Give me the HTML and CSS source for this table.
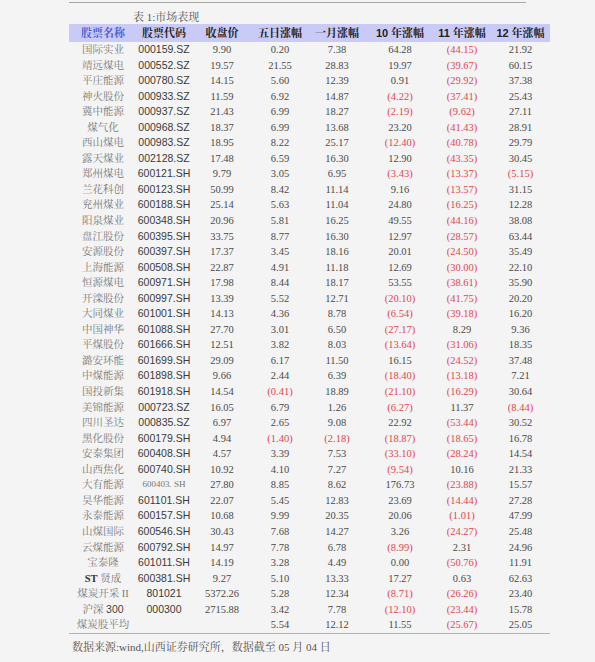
FILE: index.html
```html
<!DOCTYPE html>
<html lang="zh">
<head>
<meta charset="utf-8">
<link rel="stylesheet" href="styles.css">
</head>
<body>
<div class="page">
  <div class="toprule"></div>
  <div class="caption">表 1:市场表现</div>
  <table class="market">
    <colgroup>
      <col class="c1"><col class="c2"><col class="c3"><col class="c4"><col class="c5"><col class="c6"><col class="c7"><col class="c8">
    </colgroup>
    <thead>
      <tr>
        <th class="h-name">股票名称</th>
        <th>股票代码</th>
        <th>收盘价</th>
        <th>五日涨幅</th>
        <th>一月涨幅</th>
        <th><span class="hn">10</span> 年涨幅</th>
        <th><span class="hn">11</span> 年涨幅</th>
        <th><span class="hn">12</span> 年涨幅</th>
      </tr>
    </thead>
    <tbody>
      <tr><td class="name">国际实业</td><td class="code">000159.SZ</td><td>9.90</td><td>0.20</td><td>7.38</td><td>64.28</td><td class="neg">(44.15)</td><td>21.92</td></tr>
      <tr><td class="name">靖远煤电</td><td class="code">000552.SZ</td><td>19.57</td><td>21.55</td><td>28.83</td><td>19.97</td><td class="neg">(39.67)</td><td>60.15</td></tr>
      <tr><td class="name">平庄能源</td><td class="code">000780.SZ</td><td>14.15</td><td>5.60</td><td>12.39</td><td>0.91</td><td class="neg">(29.92)</td><td>37.38</td></tr>
      <tr><td class="name">神火股份</td><td class="code">000933.SZ</td><td>11.59</td><td>6.92</td><td>14.87</td><td class="neg">(4.22)</td><td class="neg">(37.41)</td><td>25.43</td></tr>
      <tr><td class="name">冀中能源</td><td class="code">000937.SZ</td><td>21.43</td><td>6.99</td><td>18.27</td><td class="neg">(2.19)</td><td class="neg">(9.62)</td><td>27.11</td></tr>
      <tr><td class="name">煤气化</td><td class="code">000968.SZ</td><td>18.37</td><td>6.99</td><td>13.68</td><td>23.20</td><td class="neg">(41.43)</td><td>28.91</td></tr>
      <tr><td class="name">西山煤电</td><td class="code">000983.SZ</td><td>18.95</td><td>8.22</td><td>25.17</td><td class="neg">(12.40)</td><td class="neg">(40.78)</td><td>29.79</td></tr>
      <tr><td class="name">露天煤业</td><td class="code">002128.SZ</td><td>17.48</td><td>6.59</td><td>16.30</td><td>12.90</td><td class="neg">(43.35)</td><td>30.45</td></tr>
      <tr><td class="name">郑州煤电</td><td class="code">600121.SH</td><td>9.79</td><td>3.05</td><td>6.95</td><td class="neg">(3.43)</td><td class="neg">(13.37)</td><td class="neg">(5.15)</td></tr>
      <tr><td class="name">兰花科创</td><td class="code">600123.SH</td><td>50.99</td><td>8.42</td><td>11.14</td><td>9.16</td><td class="neg">(13.57)</td><td>31.15</td></tr>
      <tr><td class="name">兖州煤业</td><td class="code">600188.SH</td><td>25.14</td><td>5.63</td><td>11.04</td><td>24.80</td><td class="neg">(16.25)</td><td>12.28</td></tr>
      <tr><td class="name">阳泉煤业</td><td class="code">600348.SH</td><td>20.96</td><td>5.81</td><td>16.25</td><td>49.55</td><td class="neg">(44.16)</td><td>38.08</td></tr>
      <tr><td class="name">盘江股份</td><td class="code">600395.SH</td><td>33.75</td><td>8.77</td><td>16.30</td><td>12.97</td><td class="neg">(28.57)</td><td>63.44</td></tr>
      <tr><td class="name">安源股份</td><td class="code">600397.SH</td><td>17.37</td><td>3.45</td><td>18.16</td><td>20.01</td><td class="neg">(24.50)</td><td>35.49</td></tr>
      <tr><td class="name">上海能源</td><td class="code">600508.SH</td><td>22.87</td><td>4.91</td><td>11.18</td><td>12.69</td><td class="neg">(30.00)</td><td>22.10</td></tr>
      <tr><td class="name">恒源煤电</td><td class="code">600971.SH</td><td>17.98</td><td>8.44</td><td>18.17</td><td>53.55</td><td class="neg">(38.61)</td><td>35.90</td></tr>
      <tr><td class="name">开滦股份</td><td class="code">600997.SH</td><td>13.39</td><td>5.52</td><td>12.71</td><td class="neg">(20.10)</td><td class="neg">(41.75)</td><td>20.20</td></tr>
      <tr><td class="name">大同煤业</td><td class="code">601001.SH</td><td>14.13</td><td>4.36</td><td>8.78</td><td class="neg">(6.54)</td><td class="neg">(39.18)</td><td>16.20</td></tr>
      <tr><td class="name">中国神华</td><td class="code">601088.SH</td><td>27.70</td><td>3.01</td><td>6.50</td><td class="neg">(27.17)</td><td>8.29</td><td>9.36</td></tr>
      <tr><td class="name">平煤股份</td><td class="code">601666.SH</td><td>12.51</td><td>3.82</td><td>8.03</td><td class="neg">(13.64)</td><td class="neg">(31.06)</td><td>18.35</td></tr>
      <tr><td class="name">潞安环能</td><td class="code">601699.SH</td><td>29.09</td><td>6.17</td><td>11.50</td><td>16.15</td><td class="neg">(24.52)</td><td>37.48</td></tr>
      <tr><td class="name">中煤能源</td><td class="code">601898.SH</td><td>9.66</td><td>2.44</td><td>6.39</td><td class="neg">(18.40)</td><td class="neg">(13.18)</td><td>7.21</td></tr>
      <tr><td class="name">国投新集</td><td class="code">601918.SH</td><td>14.54</td><td class="neg">(0.41)</td><td>18.89</td><td class="neg">(21.10)</td><td class="neg">(16.29)</td><td>30.64</td></tr>
      <tr><td class="name">美锦能源</td><td class="code">000723.SZ</td><td>16.05</td><td>6.79</td><td>1.26</td><td class="neg">(6.27)</td><td>11.37</td><td class="neg">(8.44)</td></tr>
      <tr><td class="name">四川圣达</td><td class="code">000835.SZ</td><td>6.97</td><td>2.65</td><td>9.08</td><td>22.92</td><td class="neg">(53.44)</td><td>30.52</td></tr>
      <tr><td class="name">黑化股份</td><td class="code">600179.SH</td><td>4.94</td><td class="neg">(1.40)</td><td class="neg">(2.18)</td><td class="neg">(18.87)</td><td class="neg">(18.65)</td><td>16.78</td></tr>
      <tr><td class="name">安泰集团</td><td class="code">600408.SH</td><td>4.57</td><td>3.39</td><td>7.53</td><td class="neg">(33.10)</td><td class="neg">(28.24)</td><td>14.54</td></tr>
      <tr><td class="name">山西焦化</td><td class="code">600740.SH</td><td>10.92</td><td>4.10</td><td>7.27</td><td class="neg">(9.54)</td><td>10.16</td><td>21.33</td></tr>
      <tr><td class="name">大有能源</td><td class="code-alt">600403. SH</td><td>27.80</td><td>8.85</td><td>8.62</td><td>176.73</td><td class="neg">(23.88)</td><td>15.57</td></tr>
      <tr><td class="name">昊华能源</td><td class="code">601101.SH</td><td>22.07</td><td>5.45</td><td>12.83</td><td>23.69</td><td class="neg">(14.44)</td><td>27.28</td></tr>
      <tr><td class="name">永泰能源</td><td class="code">600157.SH</td><td>10.68</td><td>9.99</td><td>20.35</td><td>20.06</td><td class="neg">(1.01)</td><td>47.99</td></tr>
      <tr><td class="name">山煤国际</td><td class="code">600546.SH</td><td>30.43</td><td>7.68</td><td>14.27</td><td>3.26</td><td class="neg">(24.27)</td><td>25.48</td></tr>
      <tr><td class="name">云煤能源</td><td class="code">600792.SH</td><td>14.97</td><td>7.78</td><td>6.78</td><td class="neg">(8.99)</td><td>2.31</td><td>24.96</td></tr>
      <tr><td class="name">宝泰隆</td><td class="code">601011.SH</td><td>14.19</td><td>3.28</td><td>4.49</td><td>0.00</td><td class="neg">(50.76)</td><td>11.91</td></tr>
      <tr><td class="name"><span class="st">ST</span> 贤成</td><td class="code">600381.SH</td><td>9.27</td><td>5.10</td><td>13.33</td><td>17.27</td><td>0.63</td><td>62.63</td></tr>
      <tr><td class="name">煤炭开采 II</td><td class="code">801021</td><td>5372.26</td><td>5.28</td><td>12.34</td><td class="neg">(8.71)</td><td class="neg">(26.26)</td><td>23.40</td></tr>
      <tr><td class="name">沪深 <span class="idx">300</span></td><td class="code">000300</td><td>2715.88</td><td>3.42</td><td>7.78</td><td class="neg">(12.10)</td><td class="neg">(23.44)</td><td>15.78</td></tr>
      <tr class="last"><td class="name">煤炭股平均</td><td class="code"></td><td></td><td>5.54</td><td>12.12</td><td>11.55</td><td class="neg">(25.67)</td><td>25.05</td></tr>
    </tbody>
  </table>
  <div class="source">数据来源:wind,山西证券研究所，数据截至 05 月 04 日</div>
</div>
</body>
</html>
```

FILE: styles.css
```css
html, body {
  margin: 0;
  padding: 0;
  background: #f4f4f4;
}

.page {
  padding: 2px 0 0 69px;
  font-family: "Liberation Serif", "Noto Serif CJK SC", "Noto Sans CJK SC", serif;
  color: #444;
}

.toprule {
  width: 457px;
  height: 0;
  border-top: 1.5px solid #a8a8a8;
}

.caption {
  margin: 7px 0 0 64px;
  height: 14px;
  line-height: 14px;
  font-size: 11px;
  color: #555;
}

.market {
  border-collapse: collapse;
  table-layout: fixed;
  width: 481px;
  border-bottom: 1.5px solid #b4b4b4;
}

.c1 { width: 68px; }
.c2 { width: 54px; }
.c3 { width: 62px; }
.c4 { width: 54px; }
.c5 { width: 60px; }
.c6 { width: 66px; }
.c7 { width: 58px; }
.c8 { width: 59px; }

.market thead tr {
  background: #cacaf7;
  height: 18px;
}

.market th {
  padding: 0;
  font-size: 11px;
  font-weight: bold;
  color: #222;
  text-align: center;
  line-height: 18px;
  white-space: nowrap;
}

.market th.h-name {
  color: #4a5ed0;
}

.market th .hn {
  font-family: "Liberation Sans", sans-serif;
}

.market tbody tr {
  height: 15.55px;
}

.market td {
  padding: 0;
  font-size: 10.5px;
  line-height: 15.55px;
  text-align: center;
  white-space: nowrap;
  color: #4a4a4a;
}

.market td.name {
  color: #7a7a7a;
}

.market td.name .st {
  color: #333;
  font-weight: bold;
}

.market td.name .idx {
  font-family: "Liberation Sans", sans-serif;
  color: #444;
}

.market td.code {
  font-family: "Liberation Sans", sans-serif;
  color: #3a3a3a;
}

.market td.code-alt {
  font-size: 9px;
  color: #777;
}

.market td.neg {
  color: #e0474c;
}

.source {
  margin: 4px 0 0 3px;
  font-size: 11px;
  line-height: 18px;
  color: #555;
}
```
